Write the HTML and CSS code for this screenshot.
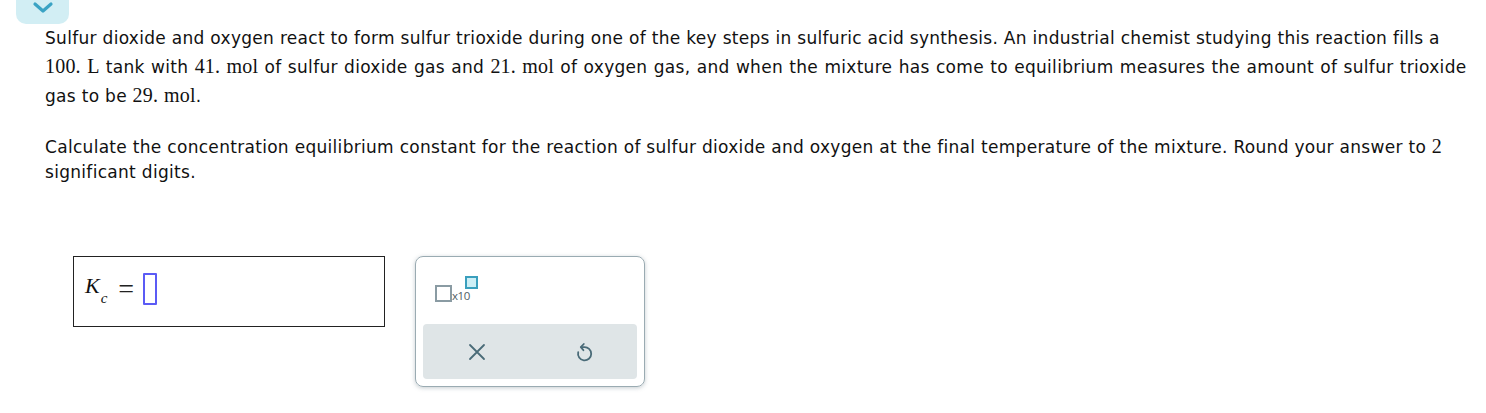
FILE: index.html
```html
<!DOCTYPE html>
<html>
<head>
<meta charset="utf-8">
<link rel="stylesheet" href="styles.css">
</head>
<body>
<div class="page">
  <div class="toggle">
    <svg width="22" height="14" viewBox="0 0 22 14"><path d="M3 3 L11 10 L19 3" fill="none" stroke="#3aa3c4" stroke-width="3.2" stroke-linecap="round" stroke-linejoin="round"/></svg>
  </div>
  <div class="content">
    <p class="para p1">Sulfur dioxide and oxygen react to form sulfur trioxide during one of the key steps in sulfuric acid synthesis. An industrial chemist studying this reaction fills a<br><span class="l2"><span class="m">100.</span> <span class="m">L</span> tank with <span class="m">41.</span> <span class="m">mol</span> of sulfur dioxide gas and <span class="m">21.</span> <span class="m">mol</span> of oxygen gas, and when the mixture has come to equilibrium measures the amount of sulfur trioxide</span><br>gas to be <span class="m">29.</span> <span class="m">mol</span>.</p>
    <p class="para p2">Calculate the concentration equilibrium constant for the reaction of sulfur dioxide and oxygen at the final temperature of the mixture. Round your answer to <span class="m">2</span><br>significant digits.</p>
    <div class="answer-row">
      <div class="answer-box">
        <span class="kc"><i>K</i><sub><i>c</i></sub></span>
        <span class="eq">=</span>
        <span class="cursor"></span>
      </div>
      <div class="panel">
        <div class="sci">
          <span class="sci-base"></span><span class="sci-x">x10</span><span class="sci-exp"></span>
        </div>
        <div class="actions">
          <svg class="ic" width="18" height="18" viewBox="0 0 18 18"><path d="M2 2 L16 16 M16 2 L2 16" stroke="#4a6b78" stroke-width="1.8" stroke-linecap="round"/></svg>
          <svg class="ic" width="18" height="22" viewBox="0 0 18 22"><path d="M3.2 11.2 A6.6 6.6 0 1 0 9 6.2 L6.4 6.2" fill="none" stroke="#4a6b78" stroke-width="1.8" stroke-linecap="round" stroke-linejoin="round"/><path d="M8.8 3 L5.8 6.2 L8.4 9.2" fill="none" stroke="#4a6b78" stroke-width="1.8" stroke-linecap="round" stroke-linejoin="round"/></svg>
        </div>
      </div>
    </div>
  </div>
</div>
</body>
</html>
```

FILE: styles.css
```css
html, body {
  margin: 0;
  padding: 0;
  background: #ffffff;
}
.page {
  position: relative;
  width: 1486px;
  height: 413px;
  font-family: "DejaVu Sans", Verdana, sans-serif;
  color: #111;
}
.toggle {
  position: absolute;
  left: 16px;
  top: 0;
  width: 53px;
  height: 24px;
  background: #d2eef4;
  border-radius: 0 0 10px 10px;
  display: flex;
  align-items: flex-start;
  justify-content: center;
  padding-top: 1px;
  box-sizing: border-box;
}
.content {
  padding: 24px 0 0 45px;
}
.para {
  margin: 0;
  font-size: 17px;
  letter-spacing: 0.3px;
  white-space: nowrap;
}
.p1 {
  line-height: 29px;
}
.l2 {
  word-spacing: 0.6px;
}
.p2 {
  margin-top: 24px;
  line-height: 25px;
}
.m {
  font-family: "Liberation Serif", "Times New Roman", serif;
  font-size: 20px;
  line-height: 1;
  letter-spacing: 0.2px;
}
.answer-row {
  display: flex;
  align-items: flex-start;
  margin-top: 71px;
  margin-left: 28px;
  gap: 30px;
}
.answer-box {
  width: 312px;
  height: 71px;
  border: 1px solid #222;
  display: flex;
  align-items: flex-start;
  padding: 16px 0 0 11px;
  box-sizing: border-box;
  font-family: "Liberation Serif", "Times New Roman", serif;
  color: #111;
}
.kc {
  font-size: 19px;
  line-height: 26px;
  white-space: nowrap;
}
.kc i {
  font-size: 22px;
}
.kc sub {
  font-size: 15px;
  position: relative;
  top: 10px;
  margin-left: 1px;
  vertical-align: baseline;
}
.kc sub i {
  font-size: 15px;
}
.eq {
  font-size: 28px;
  line-height: 30px;
  margin-left: 11px;
  margin-top: 1px;
  color: #222;
}
.cursor {
  width: 10px;
  height: 28px;
  border: 2px solid #5b5bf5;
  border-radius: 1px;
  margin-left: 9px;
  margin-top: 0px;
}
.panel {
  width: 230px;
  height: 131px;
  border: 1px solid #9aabb2;
  border-radius: 8px;
  box-shadow: 0 1px 4px rgba(90, 110, 120, 0.35);
  box-sizing: border-box;
  padding: 19px 7px 7px 7px;
  display: flex;
  flex-direction: column;
  justify-content: space-between;
}
.sci {
  position: relative;
  height: 30px;
  margin-left: 12px;
}
.sci-base {
  position: absolute;
  left: 0;
  top: 9px;
  width: 17px;
  height: 17px;
  border: 2px solid #8a9ba3;
  box-sizing: border-box;
}
.sci-x {
  position: absolute;
  left: 17px;
  top: 12px;
  font-family: "Open Sans", "DejaVu Sans", sans-serif;
  font-size: 11.5px;
  color: #4f5e64;
  letter-spacing: -0.4px;
}
.sci-exp {
  position: absolute;
  left: 30px;
  top: 0;
  width: 13px;
  height: 13px;
  background: #cdeff6;
  border: 2px solid #3a9fbd;
  box-sizing: border-box;
}
.actions {
  height: 55px;
  background: #dfe5e7;
  border-radius: 4px;
  display: grid;
  grid-template-columns: 1fr 1fr;
  align-items: center;
  justify-items: center;
}
.ic {
  display: block;
}
```
